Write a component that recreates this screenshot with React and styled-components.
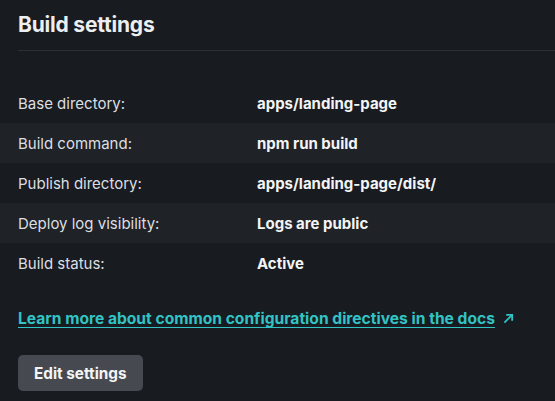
import React from "react";
import styled, { createGlobalStyle } from "styled-components";

const GlobalStyle = createGlobalStyle`
  html, body {
    margin: 0;
    padding: 0;
    background: #181b20;
  }
  body {
    font-family: Inter, "Noto Sans", "Liberation Sans", sans-serif;
    color: #e1e3e6;
    -webkit-font-smoothing: antialiased;
  }
`;

const Page = styled.div`
  width: 555px;
  height: 401px;
  overflow: hidden;
  background: #181b20;
`;

const Header = styled.div`
  margin: 0 0 0 18px;
  padding: 12px 0 12px;
  border-bottom: 1px solid #2c2f34;
`;

const Title = styled.h2`
  margin: 0;
  font-size: 21px;
  line-height: 26px;
  font-weight: 700;
  letter-spacing: -0.2px;
  color: #eceef0;
`;

const Table = styled.div`
  margin-top: 32px;
  display: flex;
  flex-direction: column;
`;

const Row = styled.div`
  display: grid;
  grid-template-columns: 239px 1fr;
  align-items: center;
  height: 40px;
  padding-left: 18px;
  background: ${(props) => (props.striped ? "#1f2227" : "transparent")};
  font-size: 15px;
`;

const Label = styled.div`
  color: #dcdfe2;
`;

const Value = styled.div`
  font-weight: 700;
  color: #f3f4f5;
`;

const LinkLine = styled.div`
  margin: 26px 0 0 18px;
  display: flex;
  align-items: center;
  gap: 8px;
`;

const DocsLink = styled.a`
  color: #32c3c4;
  font-size: 15.6px;
  font-weight: 700;
  text-decoration: underline;
  text-underline-offset: 3px;
  text-decoration-thickness: 1px;
`;

const Arrow = styled.svg`
  width: 11px;
  height: 11px;
  color: #32c3c4;
`;

const Button = styled.button`
  margin: 27px 0 0 18px;
  height: 36px;
  padding: 0 16px;
  border: none;
  border-radius: 5px;
  background: #464a50;
  color: #f3f4f5;
  font-family: inherit;
  font-size: 15.3px;
  font-weight: 700;
`;

const rows = [
  ["Base directory:", "apps/landing-page"],
  ["Build command:", "npm run build"],
  ["Publish directory:", "apps/landing-page/dist/"],
  ["Deploy log visibility:", "Logs are public"],
  ["Build status:", "Active"],
];

export default function App() {
  return (
    <Page>
      <GlobalStyle />
      <Header>
        <Title>Build settings</Title>
      </Header>
      <Table>
        {rows.map(([label, value], i) => (
          <Row key={label} striped={i % 2 === 1}>
            <Label>{label}</Label>
            <Value>{value}</Value>
          </Row>
        ))}
      </Table>
      <LinkLine>
        <DocsLink href="#">
          Learn more about common configuration directives in the docs
        </DocsLink>
        <Arrow viewBox="0 0 12 12" fill="none" stroke="currentColor" strokeWidth="2">
          <path d="M1.5 10.5 L10 2" />
          <path d="M3.5 2 H10 V8.5" />
        </Arrow>
      </LinkLine>
      <Button>Edit settings</Button>
    </Page>
  );
}
